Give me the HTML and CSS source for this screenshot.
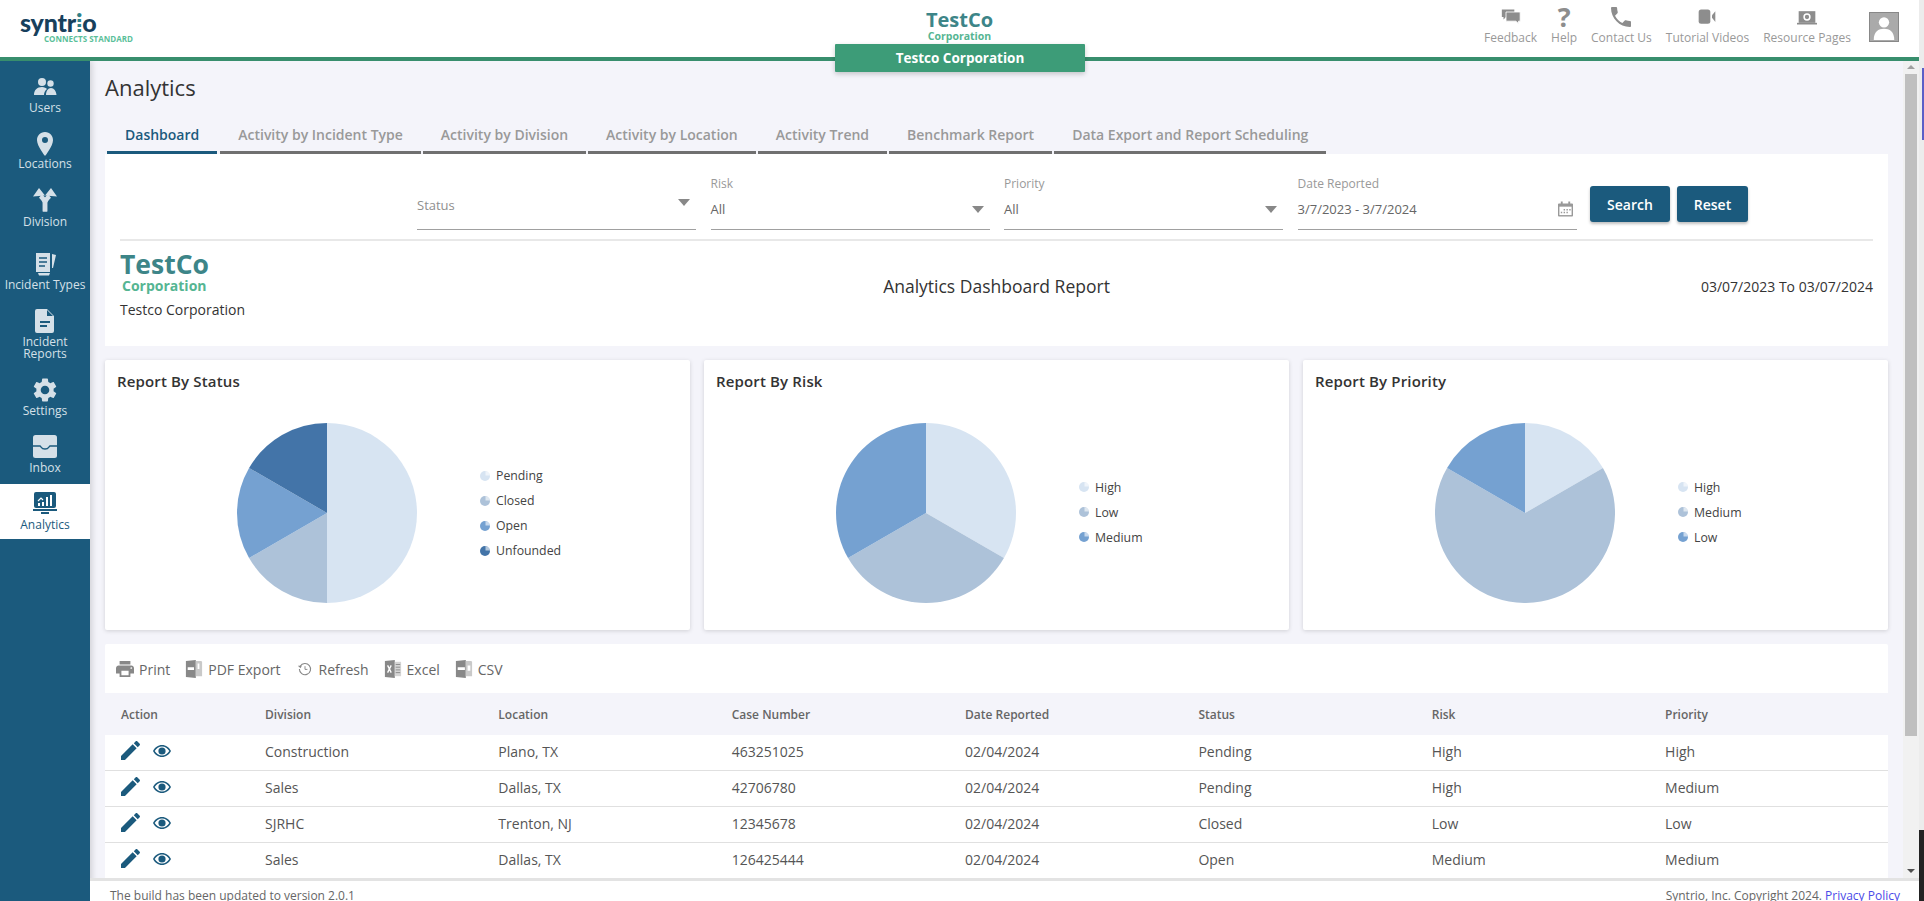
FILE: index.html
```html
<!DOCTYPE html>
<html lang="en">
<head>
<meta charset="utf-8">
<title>Analytics</title>
<link rel="stylesheet" href="styles.css">
</head>
<body>
<div class="window">
  <header class="topbar">
    <div class="brand">
      <div class="brand-name">syntr<span class="brand-i">i</span>o</div>
      <div class="brand-sub">CONNECTS STANDARD</div>
    </div>
    <div class="client">
      <div class="client-name">TestCo</div>
      <div class="client-sub">Corporation</div>
    </div>
    <div class="tools">
      <nav class="tool-nav">
        <div class="tool"><svg class="tool-icon" viewBox="0 0 24 24"><path d="M1 3h15v9H6l-3 3v-3H1z"/><path d="M6 6h17v11h-2v3l-3-3H6z" stroke="#fff" stroke-width="1"/></svg><span>Feedback</span></div>
        <div class="tool"><span class="tool-q">?</span><span>Help</span></div>
        <div class="tool"><svg class="tool-icon" viewBox="3 3 18 18"><path d="M6.620 10.790c1.440 2.830 3.760 5.140 6.590 6.590l2.200-2.200c.27-.27.67-.36 1.020-.24 1.120.37 2.330.57 3.570.57.55 0 1 .45 1 1V20c0 .55-.45 1-1 1-9.390 0-17-7.610-17-17 0-.55.45-1 1-1h3.500c.55 0 1 .45 1 1 0 1.250.2 2.450.57 3.570.11.35.03.74-.25 1.020l-2.200 2.200z"/></svg><span>Contact Us</span></div>
        <div class="tool"><svg class="tool-icon" viewBox="0 0 24 24"><rect x="2" y="3" width="14" height="17" rx="3"/><path d="M18 10l4-5v13l-4-5z"/></svg><span>Tutorial Videos</span></div>
        <div class="tool"><svg class="tool-icon" viewBox="0 0 24 24"><path d="M2 5h20v14H2z"/><path d="M0 19h24v2H0z"/><circle cx="12" cy="12" r="3.500" fill="none" stroke="#fff" stroke-width="1.800"/></svg><span>Resource Pages</span></div>
      </nav>
      <div class="avatar"><svg viewBox="0 0 30 30"><circle cx="15" cy="10" r="5.500" fill="#fff"/><path d="M4 29c0-9 5-12 11-12s11 3 11 12z" fill="#fff"/></svg></div>
    </div>
    <div class="banner">Testco Corporation</div>
  </header>

  <div class="body">
    <aside class="sidebar">
      <div class="side-item"><svg class="side-icon" viewBox="0 0 24 24"><circle cx="9" cy="7" r="4"/><circle cx="17.500" cy="8.500" r="3.200"/><path d="M1 20c0-5 3-8 8-8 2.500 0 4 1 5 2-2 1.500-3 3.500-3 6z"/><path d="M13 20c0-4 2-7 5-7s5 3 5.500 7z"/></svg><span>Users</span></div>
      <div class="side-item side-item-loc"><svg class="side-icon" viewBox="0 0 24 24"><path d="M12 0C7 0 4 3.800 4 8.200 4 14 12 24 12 24s8-10 8-15.800C20 3.800 17 0 12 0zm0 11a3 3 0 1 1 0-6 3 3 0 0 1 0 6z"/></svg><span>Locations</span></div>
      <div class="side-item side-item-short"><svg class="side-icon" viewBox="0 0 24 24"><path d="M12 23.500V16Q12 12 7.500 8" fill="none" stroke="#d5e0e8" stroke-width="4.500"/><path d="M12 23.500V16Q12 12 16.500 8" fill="none" stroke="#d5e0e8" stroke-width="4.500"/><path d="M6 0L0 8.500 12 7.500zM18 0L24 8.500 12 7.500z"/></svg><span>Division</span></div>
      <div class="side-item side-item-tall"><svg class="side-icon" viewBox="0 0 24 24"><path d="M3 1h14v19H3z"/><path d="M19 2l4 1-3 13h-1zM5 21h12l-1 2.500H6z"/><path d="M6 6h8M6 10h8M6 14h6" stroke="#1b5a7d" stroke-width="1.500" fill="none"/></svg><span>Incident Types</span></div>
      <div class="side-item side-item-double"><svg class="side-icon" viewBox="0 0 24 24"><path d="M4 0h10l7 7v15a2 2 0 0 1-2 2H4a2 2 0 0 1-2-2V2a2 2 0 0 1 2-2zm10 1v6h6z"/><path d="M7 13h10M7 17h7" stroke="#1b5a7d" stroke-width="1.800" fill="none"/></svg><span>Incident<br>Reports</span></div>
      <div class="side-item"><svg class="side-icon" viewBox="2 2 20 20"><path d="M19.140 12.940c.04-.3.06-.61.06-.94 0-.32-.02-.64-.07-.94l2.030-1.580c.18-.14.23-.41.12-.61l-1.920-3.320c-.12-.22-.37-.29-.59-.22l-2.390.96c-.5-.38-1.030-.7-1.620-.94l-.36-2.540c-.04-.24-.24-.41-.48-.41h-3.840c-.24 0-.43.17-.47.41l-.36 2.540c-.59.24-1.130.57-1.620.94l-2.390-.96c-.22-.08-.47 0-.59.22L2.740 8.870c-.12.21-.08.47.12.61l2.030 1.580c-.05.3-.09.63-.09.94s.02.64.07.94l-2.030 1.580c-.18.14-.23.41-.12.61l1.920 3.320c.12.22.37.29.59.22l2.390-.96c.5.38 1.030.7 1.620.94l.36 2.540c.05.24.24.41.48.41h3.840c.24 0 .44-.17.47-.41l.36-2.540c.59-.24 1.130-.56 1.620-.94l2.390.96c.22.08.47 0 .59-.22l1.920-3.320c.12-.22.07-.47-.12-.61l-2.010-1.580zM12 15.600c-1.980 0-3.600-1.620-3.600-3.600s1.620-3.600 3.600-3.600 3.600 1.620 3.600 3.600-1.620 3.600-3.600 3.600z"/></svg><span>Settings</span></div>
      <div class="side-item"><svg class="side-icon" viewBox="0 0 24 24"><rect width="24" height="23" rx="2.500"/><path d="M0 11h7c1 0 1 3 5 3s4-3 5-3h7" stroke="#1b5a7d" stroke-width="1.300" fill="none"/></svg><span>Inbox</span></div>
      <div class="side-item side-item-active"><svg class="side-icon" viewBox="0 0 24 24"><rect x="1" y="0" width="22" height="16" rx="2"/><path d="M5 9l3-3 2 2" stroke="#fff" fill="none" stroke-width="1.200"/><path d="M5 11h2v3H5zM9 10h2v4H9zM13 5h2v9h-2zM17 3h2v11h-2z" fill="#fff"/><path d="M0 17h24v2H0zM8 20h8v2H8z"/></svg><span>Analytics</span></div>
    </aside>

    <div class="content">
      <div class="viewport">
        <main class="page">
          <h1 class="page-title">Analytics</h1>
          <div class="tabs">
            <div class="tab tab-active">Dashboard</div>
            <div class="tab">Activity by Incident Type</div>
            <div class="tab">Activity by Division</div>
            <div class="tab">Activity by Location</div>
            <div class="tab">Activity Trend</div>
            <div class="tab">Benchmark Report</div>
            <div class="tab">Data Export and Report Scheduling</div>
          </div>

          <section class="panel">
            <div class="filters">
              <div class="field field-empty"><div class="field-row"><span class="placeholder">Status</span><i class="caret caret-up"></i></div></div>
              <div class="field"><label class="field-label">Risk</label><div class="field-row"><span>All</span><i class="caret"></i></div></div>
              <div class="field"><label class="field-label">Priority</label><div class="field-row"><span>All</span><i class="caret"></i></div></div>
              <div class="field"><label class="field-label">Date Reported</label><div class="field-row"><span>3/7/2023 - 3/7/2024</span><svg class="calendar" viewBox="0 0 16 16"><path d="M3 0h2v2h6V0h2v2h2a1 1 0 0 1 1 1v12a1 1 0 0 1-1 1H1a1 1 0 0 1-1-1V3a1 1 0 0 1 1-1h2z"/><path d="M1.500 5.500h13V14.500h-13z" fill="#fff"/><path d="M6 8h1.500v1.500H6zM9 8h1.500v1.500H9zM12 8h1.500v1.500H12zM3 11h1.500v1.500H3zM6 11h1.500v1.500H6zM9 11h1.500v1.500H9z"/></svg></div></div>
              <div class="buttons">
                <button class="btn btn-search">Search</button>
                <button class="btn btn-reset">Reset</button>
              </div>
            </div>
            <div class="report-head">
              <div class="report-org">
                <div class="org-name">TestCo</div>
                <div class="org-sub">Corporation</div>
                <div class="org-full">Testco Corporation</div>
              </div>
              <div class="report-title">Analytics Dashboard Report</div>
              <div class="report-date">03/07/2023 To 03/07/2024</div>
            </div>
          </section>

          <section class="charts">
            <article class="card">
              <h2 class="card-title">Report By Status</h2>
              <div class="chart">
                <svg class="pie" viewBox="0 0 180 180">
                  <path class="c1" d="M90 90V0A90 90 0 0 1 90 180Z"/>
                  <path class="c2" d="M90 90V180A90 90 0 0 1 12.060 135Z"/>
                  <path class="c3" d="M90 90L12.060 135A90 90 0 0 1 12.060 45Z"/>
                  <path class="c4" d="M90 90L12.060 45A90 90 0 0 1 90 0Z"/>
                </svg>
                <ul class="legend">
                  <li><svg class="key c1" viewBox="0 0 10 10"><use href="#key"/></svg>Pending</li>
                  <li><svg class="key c2" viewBox="0 0 10 10"><use href="#key"/></svg>Closed</li>
                  <li><svg class="key c3" viewBox="0 0 10 10"><use href="#key"/></svg>Open</li>
                  <li><svg class="key c4" viewBox="0 0 10 10"><use href="#key"/></svg>Unfounded</li>
                </ul>
              </div>
            </article>
            <article class="card">
              <h2 class="card-title">Report By Risk</h2>
              <div class="chart">
                <svg class="pie" viewBox="0 0 180 180">
                  <path class="c1" d="M90 90V0A90 90 0 0 1 167.940 135Z"/>
                  <path class="c2" d="M90 90L167.940 135A90 90 0 0 1 12.060 135Z"/>
                  <path class="c3" d="M90 90L12.060 135A90 90 0 0 1 90 0Z"/>
                </svg>
                <ul class="legend legend-three">
                  <li><svg class="key c1" viewBox="0 0 10 10"><use href="#key"/></svg>High</li>
                  <li><svg class="key c2" viewBox="0 0 10 10"><use href="#key"/></svg>Low</li>
                  <li><svg class="key c3" viewBox="0 0 10 10"><use href="#key"/></svg>Medium</li>
                </ul>
              </div>
            </article>
            <article class="card">
              <h2 class="card-title">Report By Priority</h2>
              <div class="chart">
                <svg class="pie" viewBox="0 0 180 180">
                  <path class="c1" d="M90 90V0A90 90 0 0 1 167.940 45Z"/>
                  <path class="c2" d="M90 90L167.940 45A90 90 0 1 1 12.060 45Z"/>
                  <path class="c3" d="M90 90L12.060 45A90 90 0 0 1 90 0Z"/>
                </svg>
                <ul class="legend legend-three">
                  <li><svg class="key c1" viewBox="0 0 10 10"><use href="#key"/></svg>High</li>
                  <li><svg class="key c2" viewBox="0 0 10 10"><use href="#key"/></svg>Medium</li>
                  <li><svg class="key c3" viewBox="0 0 10 10"><use href="#key"/></svg>Low</li>
                </ul>
              </div>
            </article>
          </section>

          <section class="table-card">
            <div class="toolbar">
              <div class="tb-item"><svg class="tb-icon" viewBox="2 2 20 20"><path d="M19 8H5c-1.660 0-3 1.340-3 3v6h4v4h12v-4h4v-6c0-1.660-1.340-3-3-3zm-3 11H8v-5h8v5zm3-7c-.55 0-1-.45-1-1s.45-1 1-1 1 .45 1 1-.45 1-1 1zm-1-9H6v4h12V3z"/></svg>Print</div>
              <div class="tb-item"><svg class="tb-icon" viewBox="0 0 20 20"><path d="M1 1l11-1v20L1 19z"/><path d="M12 1h6l1 1v16h-7z" fill="#c9c9c9"/><path d="M3 8h7v3H3zM14 4h2v6h-2z" fill="#fff"/></svg>PDF Export</div>
              <div class="tb-item tb-item-wide"><svg class="tb-icon tb-refresh" viewBox="0 0 20 20"><path d="M4 6.500A7 7 0 1 1 3 10" fill="none" stroke="#888" stroke-width="1.400"/><path d="M1 6h5l-1.500 3z"/><path d="M10 6.500V10.500h3" fill="none" stroke="#888" stroke-width="1.200"/></svg>Refresh</div>
              <div class="tb-item"><svg class="tb-icon" viewBox="0 0 20 20"><path d="M1 1l11-1v20L1 19z"/><path d="M12 2h7v16h-7z" fill="#d5d5d5"/><path d="M4 6l4 8M8 6l-4 8" stroke="#fff" stroke-width="1.500"/><path d="M13 5h5M13 8h5M13 11h5M13 14h5" stroke="#888"/></svg>Excel</div>
              <div class="tb-item"><svg class="tb-icon" viewBox="0 0 20 20"><path d="M1 1l11-1v20L1 19z"/><path d="M12 1h6l1 1v16h-7z" fill="#c9c9c9"/><path d="M3 8h8v3H3zM14 6h3v6h-3z" fill="#fff"/></svg>CSV</div>
            </div>
            <div class="row row-head">
              <div>Action</div><div>Division</div><div>Location</div><div>Case Number</div><div>Date Reported</div><div>Status</div><div>Risk</div><div>Priority</div>
            </div>
            <div class="row">
              <div class="actions"><svg class="act-edit" viewBox="3 3 18 18"><path d="M3 17.250V21h3.750L17.810 9.940l-3.750-3.750L3 17.250zM20.710 7.040c.39-.39.39-1.020 0-1.410l-2.340-2.340c-.39-.39-1.020-.39-1.410 0l-1.830 1.830 3.750 3.750 1.830-1.830z"/></svg><svg class="act-view" viewBox="0 0 18 12"><use href="#eye"/></svg></div>
              <div>Construction</div><div>Plano, TX</div><div>463251025</div><div>02/04/2024</div><div>Pending</div><div>High</div><div>High</div>
            </div>
            <div class="row">
              <div class="actions"><svg class="act-edit" viewBox="3 3 18 18"><path d="M3 17.250V21h3.750L17.810 9.940l-3.750-3.750L3 17.250zM20.710 7.040c.39-.39.39-1.020 0-1.410l-2.340-2.340c-.39-.39-1.020-.39-1.410 0l-1.830 1.830 3.750 3.750 1.830-1.830z"/></svg><svg class="act-view" viewBox="0 0 18 12"><use href="#eye"/></svg></div>
              <div>Sales</div><div>Dallas, TX</div><div>42706780</div><div>02/04/2024</div><div>Pending</div><div>High</div><div>Medium</div>
            </div>
            <div class="row">
              <div class="actions"><svg class="act-edit" viewBox="3 3 18 18"><path d="M3 17.250V21h3.750L17.810 9.940l-3.750-3.750L3 17.250zM20.710 7.040c.39-.39.39-1.020 0-1.410l-2.340-2.340c-.39-.39-1.020-.39-1.410 0l-1.830 1.830 3.750 3.750 1.830-1.830z"/></svg><svg class="act-view" viewBox="0 0 18 12"><use href="#eye"/></svg></div>
              <div>SJRHC</div><div>Trenton, NJ</div><div>12345678</div><div>02/04/2024</div><div>Closed</div><div>Low</div><div>Low</div>
            </div>
            <div class="row">
              <div class="actions"><svg class="act-edit" viewBox="3 3 18 18"><path d="M3 17.250V21h3.750L17.810 9.940l-3.750-3.750L3 17.250zM20.710 7.040c.39-.39.39-1.020 0-1.410l-2.340-2.340c-.39-.39-1.020-.39-1.410 0l-1.830 1.830 3.750 3.750 1.830-1.830z"/></svg><svg class="act-view" viewBox="0 0 18 12"><use href="#eye"/></svg></div>
              <div>Sales</div><div>Dallas, TX</div><div>126425444</div><div>02/04/2024</div><div>Open</div><div>Medium</div><div>Medium</div>
            </div>
          </section>
        </main>
        <div class="scrollbar">
          <i class="sb-up"></i>
          <div class="sb-thumb"></div>
          <i class="sb-down"></i>
        </div>
      </div>
      <footer class="footer">
        <span>The build has been updated to version 2.0.1</span>
        <span>Syntrio, Inc. Copyright 2024. <a class="footer-link" href="#">Privacy Policy</a></span>
      </footer>
    </div>
  </div>
</div>
<div class="edge">
  <div class="edge-accent"></div>
  <div class="edge-dark"></div>
</div>
<svg class="defs" width="0" height="0">
  <symbol id="key" viewBox="0 0 10 10"><circle cx="5" cy="5" r="5"/><path d="M5.500 4.500V0A5 5 0 0 1 10 4.500Z" fill="#fff" fill-opacity=".6"/></symbol>
  <symbol id="eye" viewBox="0 0 18 12"><path d="M9 0C5 0 1.800 2.500 0 6c1.800 3.500 5 6 9 6s7.200-2.500 9-6c-1.800-3.500-5-6-9-6zm0 10.500C6 10.500 3.300 8.700 1.700 6 3.300 3.300 6 1.500 9 1.500s5.700 1.800 7.300 4.500c-1.600 2.700-4.300 4.500-7.300 4.500z"/><circle cx="9" cy="6" r="3.600"/></symbol>
</svg>
</body>
</html>
```

FILE: styles.css
```css
* { box-sizing: border-box; }
html, body { margin: 0; height: 901px; overflow: hidden; }
body { display: flex; width: 1924px; font-family: "Open Sans", "Liberation Sans", sans-serif; color: #555; background: #fff; }
h1, h2, ul { margin: 0; padding: 0; }
.defs { position: absolute; }

.window { width: 1919px; height: 901px; display: flex; flex-direction: column; flex: none; }
.edge { width: 5px; height: 901px; background: #ececec; display: flex; flex-direction: column; flex: none; }
.edge-accent { margin: 68px 0 0 3px; width: 2px; height: 72px; background: #5b5fc7; }
.edge-dark { margin-top: auto; height: 71px; background: #222; }

.topbar { position: relative; height: 61px; flex: none; display: grid; grid-template-columns: 1fr auto 1fr; border-bottom: 4px solid #388e6d; background: #fff; z-index: 2; }
.brand { padding: 9px 0 0 20px; }
.brand-name { font-family: Lato, "Open Sans", sans-serif; font-weight: 900; font-size: 25px; line-height: 27px; color: #17405c; letter-spacing: -.2px; }
.brand-i { position: relative; display: inline-block; color: #2f7f87; }
.brand-i::before, .brand-i::after { content: ""; position: absolute; left: 0; right: 0; height: 1.500px; background: #fff; }
.brand-i::before { top: 13px; }
.brand-i::after { top: 18px; }
.brand-sub { margin: -3px 0 0 24px; font-size: 8px; font-weight: 700; line-height: 11px; color: #5bbf9a; white-space: nowrap; }
.client { text-align: center; padding-top: 8px; }
.client-name { font-size: 20px; font-weight: 700; line-height: 24px; color: #3d8588; }
.client-sub { font-size: 10.500px; font-weight: 700; line-height: 12px; margin-top: -2px; color: #55b592; }
.tools { display: flex; justify-content: flex-end; align-items: flex-start; padding-right: 20px; }
.tool-nav { display: flex; gap: 14px; padding-top: 7px; }
.tool { display: flex; flex-direction: column; align-items: center; font-size: 12px; line-height: 16px; color: #999; white-space: nowrap; }
.tool-icon { width: 20px; height: 20px; fill: #8d8d8d; margin-bottom: 3px; }
.tool-q { font-size: 27px; font-weight: 700; line-height: 20px; height: 20px; margin-bottom: 3px; color: #8d8d8d; }
.avatar { width: 30px; height: 30px; margin: 12px 0 0 18px; border: 1px solid #888; background: #aaa; }
.avatar svg { display: block; width: 100%; height: 100%; }
.banner { position: absolute; left: 835px; top: 44px; width: 250px; height: 28px; background: #3d9c78; color: #fff; font-size: 13.500px; font-weight: 700; line-height: 28px; text-align: center; border-radius: 1px; box-shadow: 0 2px 5px rgba(0,0,0,.2); }

.body { flex: 1; display: flex; min-height: 0; }
.sidebar { width: 90px; flex: none; padding-top: 6px; background: #1b5a7d; box-shadow: 2px 0 6px rgba(0,0,0,.15); z-index: 1; }
.side-item { height: 57px; padding-top: 8px; display: flex; flex-direction: column; align-items: center; font-size: 12px; line-height: 12px; color: #d5e0e8; text-align: center; white-space: nowrap; }
.side-item-loc { height: 56px; }
.side-item-loc .side-icon { margin-bottom: 2px; }
.side-item-short { height: 64px; }
.side-item-short .side-icon { margin-bottom: 4px; }
.side-item-tall { height: 57px; }
.side-item-double { height: 69px; }
.side-icon { width: 24px; height: 24px; fill: #d5e0e8; margin-bottom: 3px; flex: none; }
.side-item-active { height: 55px; background: #fff; color: #1b5a7d; }
.side-item-active .side-icon { fill: #1b5a7d; }

.content { flex: 1; min-width: 0; display: flex; flex-direction: column; }
.viewport { flex: 1; min-height: 0; display: flex; background: #f4f4fa; }
.page { flex: 1; min-width: 0; padding: 0 15px; overflow: hidden; }
.page-title { font-size: 22px; font-weight: 400; line-height: 28px; color: #333; padding-top: 12px; height: 64px; }

.tabs { display: flex; height: 29px; padding-left: 2px; }
.tab { padding: 0 18px; margin-right: 2px; font-size: 14px; font-weight: 600; line-height: 19px; color: #999; border-bottom: 3px solid #707070; white-space: nowrap; }
.tab-active { margin-right: 3px; color: #1b5a7d; border-bottom-color: #1b5a7d; }

.panel { height: 192px; padding: 0 15px; background: #fff; }
.filters { display: flex; height: 87px; padding-left: 297px; border-bottom: 2px solid #e8e8e8; }
.field { width: 279px; height: 76px; margin-right: 14.500px; padding-top: 22px; border-bottom: 1.500px solid #a0a0a0; font-size: 13px; color: #666; }
.field-empty { padding-top: 41px; }
.field-label { display: block; font-size: 12px; line-height: 16px; color: #999; }
.field-row { display: flex; justify-content: space-between; align-items: center; line-height: 20px; margin-top: 7px; padding-right: 6px; }
.field-empty .field-row { margin-top: 0; }
.placeholder { color: #8f8f8f; }
.caret { width: 0; height: 0; border-left: 6.500px solid transparent; border-right: 6.500px solid transparent; border-top: 7px solid #888; }
.caret-up { margin-top: -6px; }
.calendar { width: 15px; height: 16px; fill: #999; margin-right: -2px; }
.buttons { display: flex; gap: 7px; margin: 32px 0 0 -1px; align-self: flex-start; }
.btn { height: 36px; padding: 0; border: 0; border-radius: 3px; background: #1b5a7d; color: #fff; font: 600 14px "Open Sans", sans-serif; box-shadow: 0 2px 3px rgba(0,0,0,.25); }
.btn-search { width: 80px; }
.btn-reset { width: 71px; }

.report-head { display: grid; grid-template-columns: 1fr auto 1fr; align-items: start; color: #333; }
.org-name { font-size: 26.500px; font-weight: 700; line-height: 30px; margin-top: 8px; color: #3d8588; }
.org-sub { font-size: 14px; font-weight: 700; line-height: 14px; color: #55b592; margin: 0 0 0 2px; }
.org-full { font-size: 14px; line-height: 20px; margin-top: 7px; }
.report-title { font-size: 17.500px; line-height: 26px; margin-top: 32px; }
.report-date { font-size: 14px; line-height: 20px; margin-top: 36px; text-align: right; }

.charts { display: flex; gap: 14px; margin-top: 14px; }
.card { flex: 1; height: 270px; background: #fff; border-radius: 2px; box-shadow: 0 1px 4px rgba(0,0,0,.15); }
.card-title { font-size: 15px; font-weight: 600; letter-spacing: .15px; line-height: 20px; color: #333; padding: 11px 12px 0; height: 40px; }
.chart { display: flex; align-items: center; padding: 23px 0 0 132px; }
.pie { width: 180px; height: 180px; flex: none; }
.c1 { fill: #d7e4f2; }
.c2 { fill: #adc2d9; }
.c3 { fill: #75a1d1; }
.c4 { fill: #4374a8; }
.legend { list-style: none; margin-left: 63px; font-size: 12.300px; line-height: 25px; color: #444; }
.legend-three { margin-top: -2px; }
.legend li { display: flex; align-items: center; gap: 6px; }
.key { width: 10px; height: 10px; }

.table-card { margin-top: 14px; background: #fff; border-radius: 2px; }
.toolbar { display: flex; align-items: center; height: 49px; padding: 1px 0 0 11px; gap: 15px; font-size: 14px; color: #666; }
.tb-item { display: flex; align-items: center; gap: 5px; }
.tb-item-wide { margin-left: 1px; }
.tb-icon { width: 18px; height: 18px; fill: #888; }
.tb-refresh { width: 16px; height: 16px; margin-right: 1px; }
.row { display: grid; grid-template-columns: 144px repeat(7, 233.350px); align-items: center; height: 36px; padding: 0 0 2px 16px; border-bottom: 1px solid #e0e0e0; font-size: 14px; color: #555; }
.row-head { height: 42px; padding-bottom: 0; background: #f4f4fa; border-bottom: 0; font-size: 12px; font-weight: 600; color: #666; }
.actions { display: flex; align-items: center; gap: 13px; }
.act-edit { width: 19px; height: 19px; fill: #1b5a7d; margin-top: -2px; }
.act-view { width: 18px; height: 12px; fill: #1b5a7d; margin-top: -2px; }

.scrollbar { width: 16px; flex: none; display: flex; flex-direction: column; align-items: center; background: #f1f1f1; }
.sb-up { margin-top: 4px; width: 0; height: 0; border: 4px solid transparent; border-top: 0; border-bottom: 4px solid #a0a0a0; }
.sb-thumb { width: 12px; height: 662px; margin-top: 5px; background: #bfbfbf; }
.sb-down { margin-top: auto; margin-bottom: 5px; width: 0; height: 0; border: 4px solid transparent; border-bottom: 0; border-top: 4px solid #505050; }

.footer { height: 23px; flex: none; display: flex; justify-content: space-between; padding: 7px 19px 0 20px; border-top: 3px solid #e3e3e3; background: #fff; font-size: 12px; line-height: 16px; color: #666; overflow: hidden; z-index: 1; }
.footer-link { color: #4a4ae8; text-decoration: none; }
```
